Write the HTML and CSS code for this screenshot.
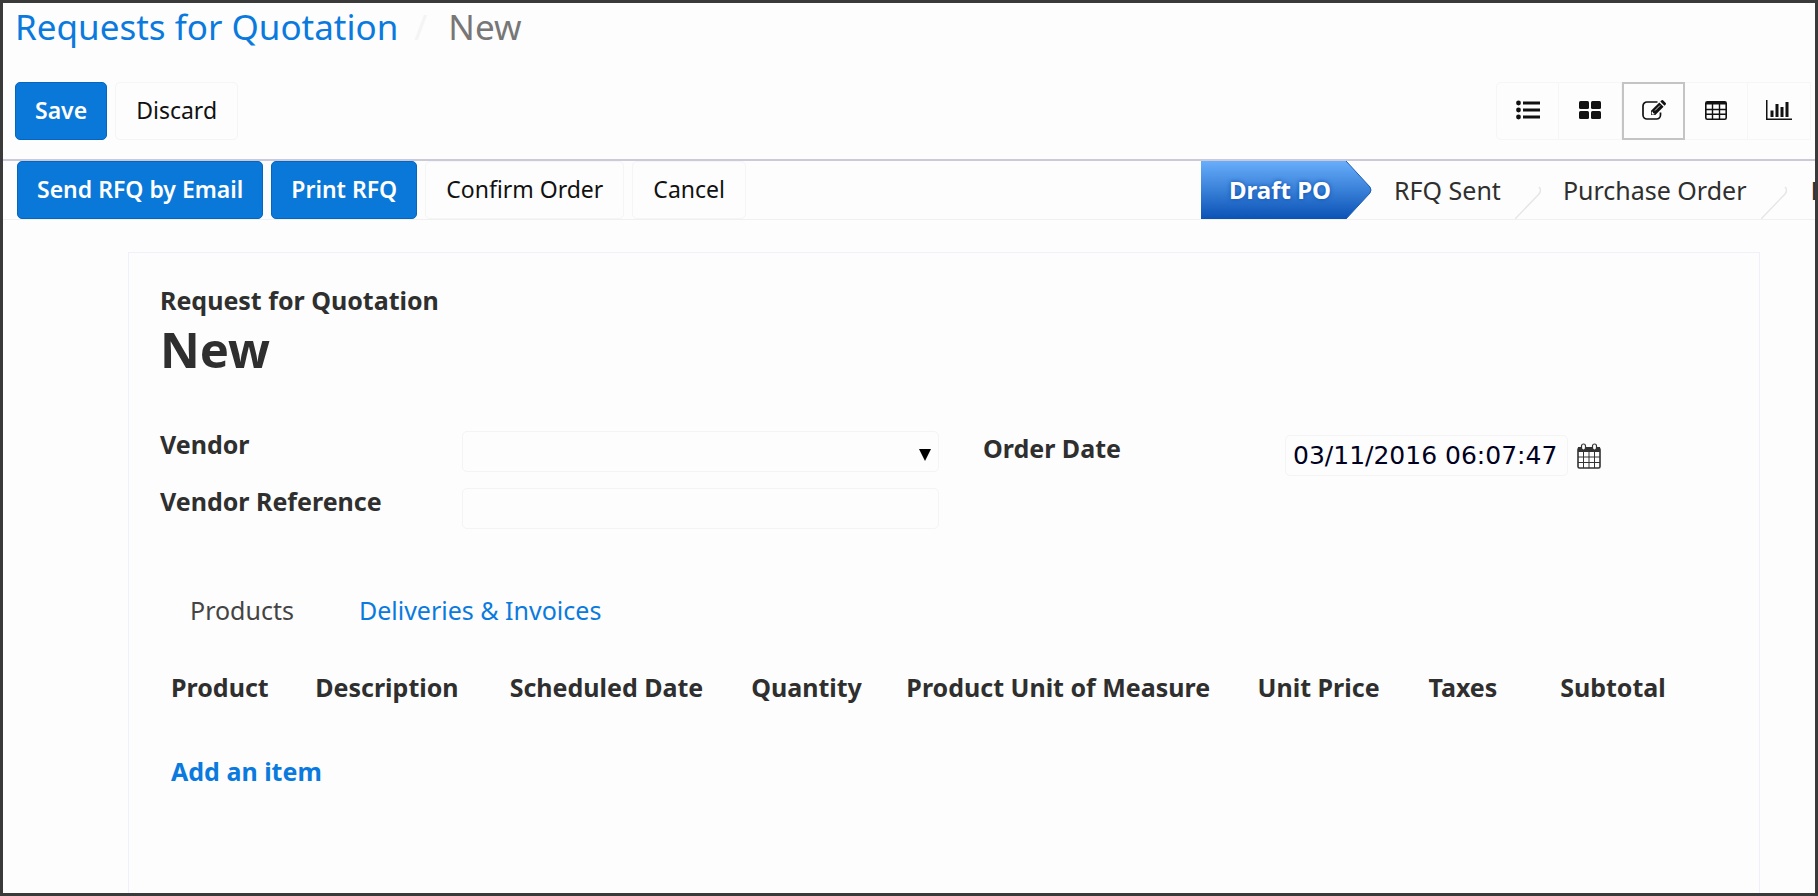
FILE: index.html
```
<!DOCTYPE html>
<html lang="en">
<head>
    <meta charset="UTF-8">
    <meta name="viewport" content="width=device-width, initial-scale=1.0">
    <title>Requests for Quotation - New</title>
    <link rel="stylesheet" href="styles.css">
</head>
<body>
    <header class="control-panel">
        <nav class="breadcrumb">
            <a href="#">Requests for Quotation</a>
            <span class="separator">/</span>
            <span class="current">New</span>
        </nav>
        <div class="toolbar">
            <div class="buttons">
                <button type="button" class="btn btn-primary">Save</button>
                <button type="button" class="btn">Discard</button>
            </div>
            <div class="view-switcher">
                <button type="button" aria-label="List view">
                    <svg width="24" height="20" viewBox="0 0 24 20"><circle cx="2.5" cy="3" r="2.4"/><circle cx="2.5" cy="10" r="2.4"/><circle cx="2.5" cy="17" r="2.4"/><path d="M7 1.5h17v3H7zM7 8.500h17v3H7zM7 15.500h17v3H7z"/></svg>
                </button>
                <button type="button" aria-label="Kanban view">
                    <svg width="22" height="18" viewBox="0 0 22 18"><rect width="10" height="8" rx="1.500"/><rect x="12" width="10" height="8" rx="1.500"/><rect y="10" width="10" height="8" rx="1.500"/><rect x="12" y="10" width="10" height="8" rx="1.500"/></svg>
                </button>
                <button type="button" class="active" aria-label="Form view">
                    <svg width="24" height="20" viewBox="0 0 24 20"><path d="M15.500 2H5a4 4 0 0 0-4 4v9a4 4 0 0 0 4 4h9.500a4 4 0 0 0 4-4v-2.500" fill="none" stroke="#111" stroke-width="1.700"/><path d="M9 15v-4.300L17.300 2.400l4.300 4.300L13.300 15z"/><path d="M18.300 1.500l1-1a1.400 1.400 0 0 1 2 0l2.200 2.200a1.400 1.400 0 0 1 0 2l-1 1z"/><path d="M10.300 11.800v2h2" fill="none" stroke="#fff" stroke-width="1.200"/><path d="M13 10.500l5-5" stroke="#fff" stroke-width=".8"/></svg>
                </button>
                <button type="button" aria-label="Pivot view">
                    <svg width="22" height="19" viewBox="0 0 22 19"><rect x=".8" y=".8" width="20.400" height="17.400" rx="1.500" fill="none" stroke="#111" stroke-width="1.600"/><path d="M1 1h20v2.500H1z"/><path d="M1 8.500h20M1 13.200h20M7.500 3v15M14.500 3v15" fill="none" stroke="#111" stroke-width="1.400"/></svg>
                </button>
                <button type="button" aria-label="Graph view">
                    <svg width="26" height="20" viewBox="0 0 26 20"><path d="M0 0h1.500v18.500H26V20H0zM4.500 10.500h3V17h-3zM9.500 4h3v13h-3zM14.500 7h3v10h-3zM19.500 2h3v15h-3z"/></svg>
                </button>
            </div>
        </div>
    </header>

    <div class="status-row">
        <div class="buttons">
            <button type="button" class="btn btn-primary">Send RFQ by Email</button>
            <button type="button" class="btn btn-primary">Print RFQ</button>
            <button type="button" class="btn">Confirm Order</button>
            <button type="button" class="btn">Cancel</button>
        </div>
        <ul class="statusbar">
            <li class="active">
                <span>Draft PO</span>
                <svg class="arrow" width="26" height="58" viewBox="0 0 26 58">
                    <defs>
                        <linearGradient id="arrow-fill" x1="0" y1="0" x2="0" y2="1">
                            <stop offset="0" stop-color="#68aefb"/>
                            <stop offset="1" stop-color="#0a52b5"/>
                        </linearGradient>
                    </defs>
                    <path d="M0 0L24 26q2 3 0 6L0 58z" fill="url(#arrow-fill)"/>
                    <path d="M0 0L24 26q2 3 0 6L0 58" fill="none" stroke="#1c5fb4" stroke-width="1"/>
                </svg>
            </li>
            <li>
                <span>RFQ Sent</span>
                <svg class="arrow" width="26" height="58" viewBox="0 0 26 58"><path d="M24 26q3 3 0 7L0 58" fill="none" stroke="#e6e6e6" stroke-width="1.500"/></svg>
            </li>
            <li>
                <span>Purchase Order</span>
                <svg class="arrow" width="26" height="58" viewBox="0 0 26 58"><path d="M24 26q3 3 0 7L0 58" fill="none" stroke="#e6e6e6" stroke-width="1.500"/></svg>
            </li>
            <li><span>Done</span></li>
        </ul>
    </div>

    <main class="sheet">
        <div class="title">
            <p>Request for Quotation</p>
            <h1>New</h1>
        </div>

        <form class="groups">
            <div class="group">
                <label for="vendor">Vendor</label>
                <div class="select-wrap">
                    <select id="vendor" name="vendor"><option></option></select>
                    <svg class="caret" width="12" height="12" viewBox="0 0 12 12"><path d="M0 0h12L6 12z"/></svg>
                </div>
                <label for="reference">Vendor Reference</label>
                <input type="text" id="reference" name="reference">
            </div>
            <div class="group group-date">
                <label for="date">Order Date</label>
                <div class="date-wrap">
                    <input type="text" id="date" name="date" value="03/11/2016 06:07:47">
                    <svg width="24" height="26" viewBox="0 0 24 26"><rect x="1" y="5" width="22" height="20" rx="1.500" fill="none" stroke="#333" stroke-width="1.600"/><path d="M1 4h22v5H1z" fill="#333"/><path d="M1 14h22M1 19.500h22M6.500 9v16M12 9v16M17.500 9v16" fill="none" stroke="#333"/><rect x="4.500" y="1" width="4" height="6" rx="2" fill="#fff" stroke="#333" stroke-width="1.200"/><rect x="15.500" y="1" width="4" height="6" rx="2" fill="#fff" stroke="#333" stroke-width="1.200"/></svg>
                </div>
            </div>
        </form>

        <nav class="tabs">
            <a href="#products" class="active">Products</a>
            <a href="#deliveries">Deliveries &amp; Invoices</a>
        </nav>

        <table class="lines" id="products">
            <colgroup>
                <col class="col-product">
                <col class="col-description">
                <col class="col-date">
                <col class="col-quantity">
                <col class="col-uom">
                <col class="col-price">
                <col class="col-taxes">
                <col class="col-subtotal">
            </colgroup>
            <thead>
                <tr>
                    <th>Product</th>
                    <th>Description</th>
                    <th>Scheduled Date</th>
                    <th>Quantity</th>
                    <th>Product Unit of Measure</th>
                    <th>Unit Price</th>
                    <th>Taxes</th>
                    <th>Subtotal</th>
                </tr>
            </thead>
            <tbody>
                <tr>
                    <td colspan="8"><a href="#">Add an item</a></td>
                </tr>
            </tbody>
        </table>
    </main>
</body>
</html>
```
FILE: styles.css
```
* {
    box-sizing: border-box;
}

body {
    margin: 0;
    min-height: 100vh;
    display: flex;
    flex-direction: column;
    border: 3px solid #3a3a3a;
    background-color: #fdfdfd;
    color: #2f2f2f;
    font-family: "Noto Sans", "Open Sans", sans-serif;
    font-size: 25px;
    line-height: 32px;
}

a {
    color: #0a7ade;
    text-decoration: none;
}

button, input, select {
    font: inherit;
}

/* Control panel */
.control-panel {
    padding: 0 4px 19px 12px;
    border-bottom: 2px solid #cacada;
}

.breadcrumb {
    display: flex;
    gap: 16px;
    font-size: 35px;
    line-height: 48px;
}

.breadcrumb .separator {
    color: #f4f4f4;
}

.breadcrumb .current {
    color: #777;
    padding-left: 5px;
}

.toolbar {
    display: flex;
    justify-content: space-between;
    margin-top: 31px;
}

.buttons {
    display: flex;
    gap: 8px;
}

.btn {
    height: 58px;
    padding: 0 20px 2px;
    border: 1px solid #f5f5f5;
    border-radius: 5px;
    background-color: #fdfdfd;
    color: #111;
    font-size: 23px;
    white-space: nowrap;
    cursor: pointer;
}

.btn-primary {
    padding: 0 19px 2px;
    border-color: #0566c0;
    background-color: #0a78d8;
    color: #fff;
    font-weight: 600;
}

.view-switcher {
    display: flex;
    height: 58px;
}

.view-switcher button {
    width: 63px;
    padding: 0 0 2px;
    display: flex;
    align-items: center;
    justify-content: center;
    border: 1px solid #f6f6f6;
    border-left-width: 0;
    background: none;
    fill: #111;
    cursor: pointer;
}

.view-switcher button:first-child {
    border-left-width: 1px;
    border-radius: 5px 0 0 5px;
}

.view-switcher .active {
    border: 2px solid #c4c4c4;
}

/* Actions and status */
.status-row {
    display: flex;
    justify-content: space-between;
    padding-left: 14px;
    border-bottom: 1px solid #f0f0f0;
}

.statusbar {
    flex: 0 0 614px;
    display: flex;
    margin: 0;
    padding: 0;
    list-style: none;
    overflow: hidden;
}

.statusbar li {
    display: flex;
    align-items: center;
    white-space: nowrap;
}

.statusbar span {
    padding: 0 14px 0 22px;
    line-height: 58px;
}

.statusbar li:last-child span {
    padding-left: 24px;
}

.statusbar .active span {
    padding: 0 15px 0 28px;
    background: linear-gradient(#68aefb, #0a52b5);
    color: #fff;
    font-size: 24px;
    font-weight: bold;
    text-shadow: 0 0 4px #0a4fae;
}

.arrow {
    flex: none;
}

/* Form sheet */
.sheet {
    flex: 1;
    margin: 32px 55px 0 125px;
    padding: 31px 31px 32px;
    border: 1px solid #f0f0fc;
    border-bottom: 0;
}

.title p {
    margin: 0;
    font-weight: bold;
}

.title h1 {
    margin: 0;
    font-size: 49px;
    line-height: 66px;
}

.groups {
    display: flex;
    gap: 44px;
    margin-top: 49px;
}

.group {
    flex: 779;
    display: grid;
    grid-template-columns: 302px 1fr;
    row-gap: 16px;
}

.group-date {
    flex: 745;
    align-content: start;
    padding-top: 4px;
}

.group label {
    font-weight: bold;
    line-height: 26px;
}

.group input, .group select {
    width: 100%;
    height: 41px;
    padding: 0 7px;
    border: 1px solid #f4f4f4;
    border-radius: 5px;
    background-color: #fdfdfd;
    color: #000020;
}

.group select {
    appearance: none;
}

.select-wrap {
    position: relative;
}

.caret {
    position: absolute;
    top: 18px;
    right: 8px;
    pointer-events: none;
}

.date-wrap {
    display: flex;
    align-items: center;
    gap: 9px;
}

.group .date-wrap input {
    width: 283px;
    font-family: "DejaVu Sans", sans-serif;
}

/* Tabs */
.tabs {
    display: flex;
    gap: 65px;
    margin-top: 65px;
    padding-left: 30px;
}

.tabs .active {
    color: #444;
}

/* Order lines */
.lines {
    width: 100%;
    margin-top: 45px;
    border-collapse: collapse;
    table-layout: fixed;
}

.lines th, .lines td {
    padding: 0 0 0 11px;
    text-align: left;
    font-weight: bold;
    white-space: nowrap;
}

.lines td {
    padding-top: 52px;
}

.col-product { width: 9.2%; }
.col-description { width: 12.4%; }
.col-date { width: 15.4%; }
.col-quantity { width: 9.9%; }
.col-uom { width: 22.4%; }
.col-price { width: 10.9%; }
.col-taxes { width: 8.4%; }
.col-subtotal { width: 11.4%; }
```
